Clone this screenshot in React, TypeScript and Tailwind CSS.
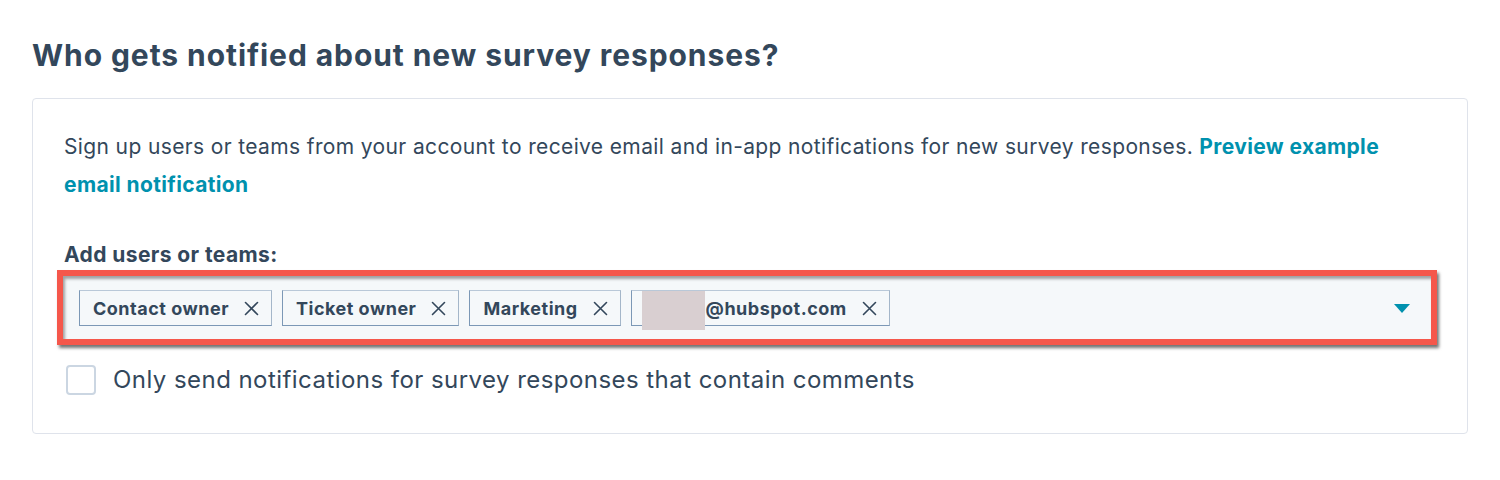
import React from "react";

const XIcon = () => (
  <svg width="15" height="15" viewBox="0 0 15 15" className="shrink-0">
    <path d="M1.5 1.5 L13.5 13.5 M13.5 1.5 L1.5 13.5" stroke="#33475b" strokeWidth="1.6" strokeLinecap="round" />
  </svg>
);

const Chip = ({ children }: { children: React.ReactNode }) => (
  <div className="flex h-[36px] items-center gap-[15px] border border-[#b9c8d8] border-l-[#7c98b6] border-b-[#7c98b6] border-r-[#a4b6c9] bg-[#f5f8fa] pl-[13px] pr-[12px] text-[18px] font-bold tracking-[0.5px] text-[#33475b]">
    {children}
    <XIcon />
  </div>
);

export default function App() {
  return (
    <div className="min-h-[480px] bg-white px-[32px] pt-[37px] text-[#33475b]" style={{ fontFamily: "Inter, 'Open Sans', sans-serif" }}>
      <h1 className="text-[30px] font-bold leading-[36px] tracking-[0.92px]">Who gets notified about new survey responses?</h1>
      <div className="mt-[25px] rounded-[4px] border border-[#dfe3eb] px-[31px] pb-[38px] pt-[29px]">
        <p className="text-[21px] leading-[38px] tracking-[0.37px]">
          Sign up users or teams from your account to receive email and in-app notifications for new survey responses.{" "}
          <span className="font-bold text-[#0091ae]">Preview example email notification</span>
        </p>
        <div className="mt-[37px] text-[21px] font-bold leading-[28px] tracking-[0.4px]">Add users or teams:</div>
        <div className="-ml-[7px] mr-[-1px] mt-[1px] border-[6px] border-[#f5574b] shadow-[2px_3px_3px_rgba(0,0,0,0.55)]">
          <div className="flex h-[63px] items-center bg-[#f5f8fa] pl-[16px] pr-[21px] shadow-[inset_2px_3px_3px_rgba(0,0,0,0.35)]">
            <div className="flex flex-1 items-center gap-[10px] pt-[1px]">
              <Chip>Contact owner</Chip>
              <Chip>Ticket owner</Chip>
              <Chip>Marketing</Chip>
              <Chip>
                <span className="flex items-center">
                  <span className="-ml-[3px] mr-[1px] mt-[4px] inline-block h-[39px] w-[63px] bg-[#d9cfd1]" />
                  @hubspot.com
                </span>
              </Chip>
            </div>
            <svg width="16" height="9" viewBox="0 0 16 9" className="mt-[2px]">
              <path d="M0 0 H16 L8 9 Z" fill="#0091ae" />
            </svg>
          </div>
        </div>
        <label className="mt-[20px] flex items-center gap-[17px]">
          <span className="ml-[2px] inline-block h-[30px] w-[30px] shrink-0 rounded-[4px] border-2 border-[#cbd6e2] bg-white" />
          <span className="text-[24px] leading-[30px] tracking-[0.45px]">Only send notifications for survey responses that contain comments</span>
        </label>
      </div>
    </div>
  );
}
